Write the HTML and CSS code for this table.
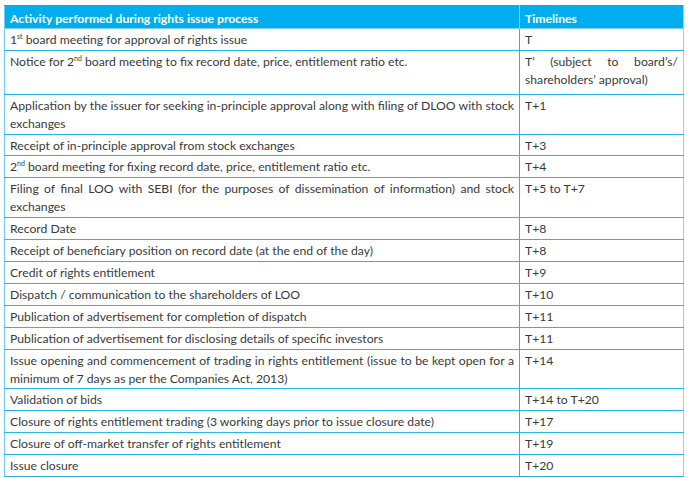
FILE: index.html
```html
<!DOCTYPE html>
<html>
<head>
<meta charset="utf-8">
<link rel="stylesheet" href="styles.css">
</head>
<body>
<table class="timeline">
  <thead>
    <tr><th class="act">Activity performed during rights issue process</th><th class="time">Timelines</th></tr>
  </thead>
  <tbody>
    <tr><td>1<sup>st</sup> board meeting for approval of rights issue</td><td>T</td></tr>
    <tr class="tall"><td>Notice for 2<sup>nd</sup> board meeting to fix record date, price, entitlement ratio etc.</td><td>T’ (subject to board’s/ shareholders’ approval)</td></tr>
    <tr><td class="fit">Application by the issuer for seeking in-principle approval along with filing of DLOO with stock <span class="norm">exchanges</span></td><td>T+1</td></tr>
    <tr><td>Receipt of in-principle approval from stock exchanges</td><td>T+3</td></tr>
    <tr><td>2<sup>nd</sup> board meeting for fixing record date, price, entitlement ratio etc.</td><td>T+4</td></tr>
    <tr><td class="fit">Filing of final LOO with SEBI (for the purposes of dissemination of information) and stock <span class="norm">exchanges</span></td><td>T+5 to T+7</td></tr>
    <tr><td>Record Date</td><td>T+8</td></tr>
    <tr><td>Receipt of beneficiary position on record date (at the end of the day)</td><td>T+8</td></tr>
    <tr><td>Credit of rights entitlement</td><td>T+9</td></tr>
    <tr><td>Dispatch / communication to the shareholders of LOO</td><td>T+10</td></tr>
    <tr><td>Publication of advertisement for completion of dispatch</td><td>T+11</td></tr>
    <tr><td>Publication of advertisement for disclosing details of specific investors</td><td>T+11</td></tr>
    <tr><td class="fit">Issue opening and commencement of trading in rights entitlement (issue to be kept open for a <span class="norm">minimum of 7 days as per the Companies Act, 2013)</span></td><td>T+14</td></tr>
    <tr><td>Validation of bids</td><td>T+14 to T+20</td></tr>
    <tr><td>Closure of rights entitlement trading (3 working days prior to issue closure date)</td><td>T+17</td></tr>
    <tr><td>Closure of off-market transfer of rights entitlement</td><td>T+19</td></tr>
    <tr><td>Issue closure</td><td>T+20</td></tr>
  </tbody>
</table>
</body>
</html>
```

FILE: styles.css
```css
html, body {
  margin: 0;
  padding: 0;
  background: #ffffff;
}
body {
  padding: 5px 5px 0 4px;
  font-family: "Lato", "Liberation Sans", sans-serif;
  font-size: 12.2px;
  color: #3a3a3a;
}
.timeline {
  border-collapse: collapse;
  width: 680px;
  table-layout: fixed;
}
.timeline th.act { width: 504px; }
.timeline th {
  background: #00aeef;
  color: #ffffff;
  font-weight: 700;
  text-align: left;
  padding: 4px 5px 0 5px;
  height: 18px;
  line-height: 18px;
  border: 1px solid #7fd0f3;
  border-top-color: #00aeef;
}
.timeline td {
  border: 1px solid #2ab4ec;
  padding: 2px 5px 1px 5px;
  line-height: 17.9px;
  vertical-align: top;
  text-align: justify;
}
.timeline td.fit {
  word-spacing: -1.5px;
}
.timeline td.fit .norm {
  word-spacing: normal;
}
.timeline tr.tall td {
  padding-bottom: 5px;
}
.timeline td:first-child,
.timeline th:first-child {
  border-left-color: #6fcbf2;
}
.timeline td:last-child,
.timeline th:last-child {
  border-right-color: #8ad6f5;
}
sup {
  font-size: 7px;
  line-height: 0;
  vertical-align: 5px;
}
```
